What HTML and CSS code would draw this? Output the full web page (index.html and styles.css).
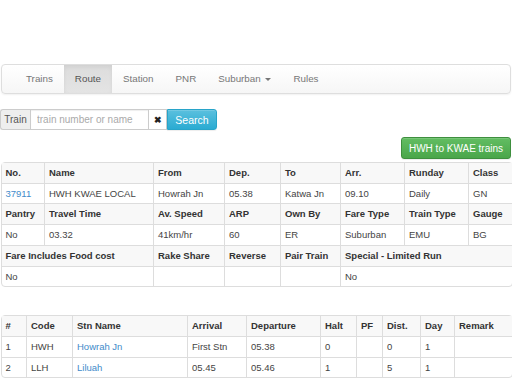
FILE: index.html
```html
<!DOCTYPE html>
<html lang="en">
<head>
    <meta charset="UTF-8">
    <meta name="viewport" content="width=device-width, initial-scale=1.0">
    <title>Route - 37911 HWH KWAE LOCAL</title>
    <link rel="stylesheet" href="styles.css">
</head>
<body>
    <div class="page">
        <div class="navbar">
            <ul class="nav">
                <li><a href="#">Trains</a></li>
                <li class="active"><a href="#">Route</a></li>
                <li><a href="#">Station</a></li>
                <li><a href="#">PNR</a></li>
                <li><a href="#">Suburban <span class="caret"></span></a></li>
                <li><a href="#">Rules</a></li>
            </ul>
        </div>

        <div class="search">
            <span class="addon">Train</span>
            <input type="text" class="search-input" placeholder="train number or name">
            <button class="btn-clear">&#10006;</button>
            <button class="btn-search">Search</button>
        </div>

        <div class="actions">
            <button class="btn-success">HWH to KWAE trains</button>
        </div>

        <table class="grid info">
            <colgroup>
                <col style="width:42px"><col style="width:109px"><col style="width:71px"><col style="width:56px">
                <col style="width:60px"><col style="width:64px"><col style="width:64px"><col style="width:44px">
            </colgroup>
            <tr class="head">
                <th>No.</th><th>Name</th><th>From</th><th>Dep.</th><th>To</th><th>Arr.</th><th>Runday</th><th>Class</th>
            </tr>
            <tr>
                <td><a href="#">37911</a></td><td>HWH KWAE LOCAL</td><td>Howrah Jn</td><td>05.38</td><td>Katwa Jn</td><td>09.10</td><td>Daily</td><td>GN</td>
            </tr>
            <tr class="head">
                <th>Pantry</th><th>Travel Time</th><th>Av. Speed</th><th>ARP</th><th>Own By</th><th>Fare Type</th><th>Train Type</th><th>Gauge</th>
            </tr>
            <tr>
                <td>No</td><td>03.32</td><td>41km/hr</td><td>60</td><td>ER</td><td>Suburban</td><td>EMU</td><td>BG</td>
            </tr>
            <tr class="head">
                <th colspan="2">Fare Includes Food cost</th><th>Rake Share</th><th>Reverse</th><th>Pair Train</th><th colspan="3">Special - Limited Run</th>
            </tr>
            <tr>
                <td colspan="2">No</td><td></td><td></td><td></td><td colspan="3">No</td>
            </tr>
        </table>

        <table class="grid route">
            <colgroup>
                <col style="width:24px"><col style="width:46px"><col style="width:115px"><col style="width:59px"><col style="width:74px">
                <col style="width:36px"><col style="width:26px"><col style="width:38px"><col style="width:34px"><col style="width:58px">
            </colgroup>
            <tr class="head">
                <th>#</th><th>Code</th><th>Stn Name</th><th>Arrival</th><th>Departure</th><th>Halt</th><th>PF</th><th>Dist.</th><th>Day</th><th>Remark</th>
            </tr>
            <tr>
                <td>1</td><td>HWH</td><td><a href="#">Howrah Jn</a></td><td>First Stn</td><td>05.38</td><td>0</td><td></td><td>0</td><td>1</td><td></td>
            </tr>
            <tr>
                <td>2</td><td>LLH</td><td><a href="#">Liluah</a></td><td>05.45</td><td>05.46</td><td>1</td><td></td><td>5</td><td>1</td><td></td>
            </tr>
        </table>
    </div>
</body>
</html>
```

FILE: styles.css
```css
html {
    overflow: hidden;
}
body {
    margin: 0;
    font-family: 'Liberation Sans', Arial, sans-serif;
    font-size: 9.5px;
    color: #333;
    background-color: #fff;
}
a {
    color: #428bca;
    text-decoration: none;
}
.page {
    padding-top: 64px;
}

/* navbar */
.navbar {
    margin: 0 1px;
    height: 28px;
    border: 1px solid #dedede;
    border-radius: 4px;
    background: linear-gradient(to bottom, #fff 0%, #f6f6f6 100%);
    box-shadow: 0 1px 2px rgba(0, 0, 0, 0.06);
}
.nav {
    list-style: none;
    margin: 0 0 0 13px;
    padding: 0;
    display: flex;
}
.nav a {
    display: block;
    padding: 0 11px;
    line-height: 28px;
    color: #777;
    font-size: 9.8px;
}
.nav .active a {
    color: #555;
    background: linear-gradient(to bottom, #dcdcdc 0%, #e4e4e4 100%);
    box-shadow: inset 0 2px 4px rgba(0, 0, 0, 0.06);
}
.caret {
    display: inline-block;
    width: 0;
    height: 0;
    margin-left: 2px;
    vertical-align: middle;
    border-top: 3px solid #777;
    border-left: 3px solid transparent;
    border-right: 3px solid transparent;
}

/* search */
.search {
    display: flex;
    margin-top: 15px;
    height: 21px;
}
.addon {
    width: 30px;
    box-sizing: border-box;
    border: 1px solid #ccc;
    border-right: none;
    border-radius: 3px 0 0 3px;
    background-color: #eee;
    color: #555;
    line-height: 19px;
    text-align: center;
    font-size: 10px;
}
.search-input {
    width: 119px;
    box-sizing: border-box;
    margin: 0;
    padding: 0 6px;
    border: 1px solid #ccc;
    font-family: inherit;
    font-size: 10px;
    color: #555;
    box-shadow: inset 0 1px 1px rgba(0, 0, 0, 0.07);
}
.search-input::placeholder {
    color: #aaa;
}
.btn-clear {
    width: 18px;
    padding: 0;
    border: 1px solid #ccc;
    border-left: none;
    background: #fff;
    color: #222;
    font-size: 9px;
    font-weight: bold;
}
.btn-search {
    width: 50px;
    padding: 0;
    border: 1px solid #28a4c9;
    border-radius: 0 3px 3px 0;
    background: linear-gradient(to bottom, #5bc0de 0%, #2aabd2 100%);
    color: #fff;
    font-family: inherit;
    font-size: 10.5px;
    box-shadow: inset 0 1px 0 rgba(255, 255, 255, 0.15), 0 1px 1px rgba(0, 0, 0, 0.075);
}

/* green button */
.actions {
    display: flex;
    justify-content: flex-end;
    margin: 7px 1px 3px 0;
}
.btn-success {
    width: 110px;
    height: 22px;
    padding: 0;
    border: 1px solid #3e8f3e;
    border-radius: 3px;
    background: linear-gradient(to bottom, #62bd62 0%, #4aa64a 100%);
    color: #fff;
    font-family: inherit;
    font-size: 10px;
    box-shadow: inset 0 1px 0 rgba(255, 255, 255, 0.15), 0 1px 1px rgba(0, 0, 0, 0.075);
}

/* tables */
.grid {
    margin: 0 1px;
    width: 510px;
    table-layout: fixed;
    border-collapse: separate;
    border-spacing: 0;
    border: 1px solid #ddd;
    border-radius: 4px;
}
.grid th,
.grid td {
    padding: 4px 4px 4px 4px;
    line-height: 11.7px;
    text-align: left;
    vertical-align: top;
    white-space: nowrap;
    overflow: hidden;
    border-left: 1px solid #ddd;
    border-top: 1px solid #ddd;
}
.grid td {
    color: #444;
}
.grid td:first-child,
.grid th:first-child {
    border-left: none;
    padding-left: 3.5px;
}
.grid tr:first-child th,
.grid tr:first-child td {
    border-top: none;
}
.grid th {
    font-weight: bold;
}
.grid .head {
    background-color: #f8f8f8;
}
.route {
    margin-top: 28px;
}
```
